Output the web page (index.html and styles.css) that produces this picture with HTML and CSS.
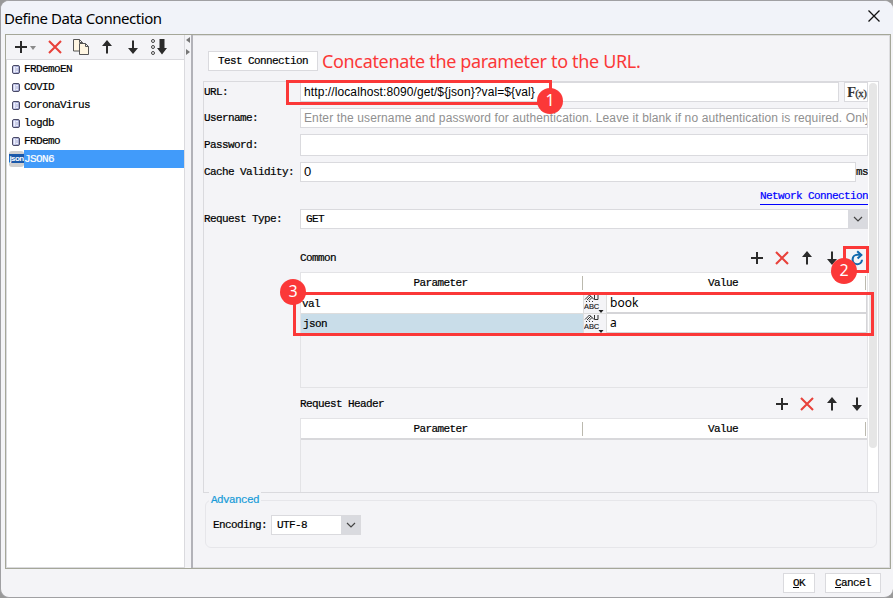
FILE: index.html
```html
<!DOCTYPE html>
<html lang="en">
<head>
<meta charset="utf-8">
<title>Define Data Connection</title>
<link rel="stylesheet" href="styles.css">
</head>
<body>
<svg class="defs" width="0" height="0" aria-hidden="true">
  <symbol id="plus" viewBox="0 0 16 16"><path d="M8 2v12M2 8h12" stroke="#2b2b2b" stroke-width="2" fill="none"/></symbol>
  <symbol id="cross" viewBox="0 0 16 16"><path d="M2 2l12 12M14 2L2 14" stroke="#e8413b" stroke-width="2.100" fill="none"/></symbol>
  <symbol id="up" viewBox="0 0 16 16"><path d="M8 1l5 6H9v7.500H7V7H3z" fill="#2b2b2b"/></symbol>
  <symbol id="down" viewBox="0 0 16 16"><path d="M8 15l5-6H9V1.500H7V9H3z" fill="#2b2b2b"/></symbol>
  <symbol id="db" viewBox="0 0 8 9"><rect x=".5" y=".5" width="7" height="8" rx="1.500" fill="#a9aed6" stroke="#4a4a66"/><path d="M1.500 1.500h2v6h-2z" fill="#eef0ff"/><path d="M4 2.500h2M4 6.500h2M5 3v3" stroke="#fff" stroke-width=".8"/></symbol>
  <symbol id="chev" viewBox="0 0 10 6"><path d="M1 1l4 4 4-4" fill="none" stroke="#444" stroke-width="1.200"/></symbol>
  <symbol id="type" viewBox="0 0 20 20"><path d="M1 5.500l4.500-4.500 4.500 4.500M3 6l4-4M5 6.500l3-3M2 7.500h1M5 7.500h1M8 7.500h1M10.500 1v4.500h3.500V1" fill="none" stroke="#333" stroke-width="1"/><text x="0" y="15" font-family="Liberation Sans" font-size="7.500" letter-spacing="-.1" fill="#222" stroke="#222" stroke-width=".15">ABC</text><path d="M14.500 16h5l-2.500 3z" fill="#222"/></symbol>
</svg>
<div class="window">
  <header class="titlebar"><span class="title">Define Data Connection</span>
    <svg class="close" viewBox="0 0 12 12"><path d="M.5.500l11 11M11.500.500l-11 11" stroke="#111" stroke-width="1.300"/></svg>
  </header>
  <main class="main">
    <aside class="side">
      <div class="toolbar">
        <svg class="ico add"><use href="#plus"/></svg><i class="caret"></i>
        <svg class="ico"><use href="#cross"/></svg>
        <svg class="ico" viewBox="0 0 16 16"><path d="M.5.500h6l3 3v8.500h-9zM6.500.500v3h3" fill="#fff6e2" stroke="#555"/><path d="M6.500 4.500h6l3 3v8h-9zM12.500 4.500v3h3" fill="#fff6e2" stroke="#555"/></svg>
        <svg class="ico"><use href="#up"/></svg>
        <svg class="ico"><use href="#down"/></svg>
        <svg class="ico" viewBox="0 0 16 16"><g fill="none" stroke="#444"><circle cx="2" cy="2" r="1.500"/><circle cx="2" cy="8" r="1.500"/><circle cx="2" cy="14" r="1.500"/></g><path d="M8.500 0h5v9h2.500l-5 6.500L6 9h2.500z" fill="#2b2b2b"/></svg>
      </div>
      <ul class="list">
        <li><svg class="db"><use href="#db"/></svg><span>FRDemoEN</span></li>
        <li><svg class="db"><use href="#db"/></svg><span>COVID</span></li>
        <li><svg class="db"><use href="#db"/></svg><span>CoronaVirus</span></li>
        <li><svg class="db"><use href="#db"/></svg><span>logdb</span></li>
        <li><svg class="db"><use href="#db"/></svg><span>FRDemo</span></li>
        <li class="sel"><b class="json">json</b><span>JSON6</span></li>
      </ul>
    </aside>
    <div class="split"><i class="tri left"></i><i class="tri right"></i></div>
    <section class="content">
      <div class="top"><button class="btn test">Test Connection</button><span class="note">Concatenate the parameter to the URL.</span></div>
      <div class="scroll">
        <div class="form">
          <div class="row url"><label>URL:</label><div class="field address">http://localhost:8090/get/${json}?val=${val}</div><div class="fx">F<small>(x)</small></div></div>
          <div class="row user"><label>Username:</label><div class="field hint">Enter the username and password for authentication. Leave it blank if no authentication is required. Only</div></div>
          <div class="row pass"><label>Password:</label><div class="field"></div></div>
          <div class="row cache"><label>Cache Validity:</label><div class="field zero">0</div><span class="ms">ms</span></div>
          <div class="linkrow"><a>Network Connection</a></div>
          <div class="row req"><label>Request Type:</label><div class="combo"><span>GET</span><i><svg><use href="#chev"/></svg></i></div></div>
          <div class="block">
            <div class="bar common"><span>Common</span>
              <div class="tools"><svg><use href="#plus"/></svg><svg><use href="#cross"/></svg><svg><use href="#up"/></svg><svg><use href="#down"/></svg><svg viewBox="0 0 16 16"><path d="M11.500 4.800H8.500A4.700 4.700 0 1 0 13 9.800" fill="none" stroke="#1169ad" stroke-width="2.100"/><path d="M8.200 1.200L12.300 5 8.600 8.500" fill="none" stroke="#1169ad" stroke-width="2.100"/></svg></div>
            </div>
            <div class="table params">
              <div class="head"><span>Parameter</span><span>Value</span></div>
              <div class="tr"><span class="key">val</span><span class="type"><svg><use href="#type"/></svg></span><span class="val">book</span></div>
              <div class="tr on"><span class="key">json</span><span class="type"><svg><use href="#type"/></svg></span><span class="val">a</span></div>
            </div>
            <div class="bar header"><span>Request Header</span>
              <div class="tools"><svg><use href="#plus"/></svg><svg><use href="#cross"/></svg><svg><use href="#up"/></svg><svg><use href="#down"/></svg></div>
            </div>
            <div class="table headers"><div class="head"><span>Parameter</span><span>Value</span></div></div>
          </div>
        </div>
        <div class="track"><div class="thumb"></div></div>
      </div>
      <div class="advanced"><span class="legend">Advanced</span><label>Encoding:</label><div class="combo enc"><span>UTF-8</span><i><svg><use href="#chev"/></svg></i></div></div>
    </section>
  </main>
  <footer class="footer"><button class="btn"><u>O</u>K</button><button class="btn cancel"><u>C</u>ancel</button></footer>
  <div class="mark m1"></div><div class="mark m2"></div><div class="mark m3"></div>
  <b class="dot d1">1</b><b class="dot d2">2</b><b class="dot d3">3</b>
</div>
</body>
</html>
```
FILE: styles.css
```css
* { box-sizing: border-box; }
body { margin: 0; background: #999; font: 11px/18px "Liberation Mono", monospace; letter-spacing: -.6px; color: #000; -webkit-text-stroke: .2px; overflow: hidden; }
.defs { position: absolute; }
svg { display: block; flex: none; }
.window { position: relative; width: 893px; height: 598px; background: #f4f4f7; border: 1px solid #a0a0a3; border-right: 0; border-radius: 9px; overflow: hidden; display: flex; flex-direction: column; }
.titlebar { height: 33px; flex: none; background: #f1f3f9; display: flex; align-items: center; justify-content: space-between; padding: 0 13px 0 3px; }
.title { font: 15px/30px "Noto Sans", sans-serif; letter-spacing: -.45px; -webkit-text-stroke: 0; }
.close { width: 12px; height: 12px; margin-top: -3px; }
.main { margin-left: 4px; width: 886px; height: 535px; flex: none; border: 1px solid #a5a799; display: flex; }
.side { width: 179px; flex: none; border: solid #dadade; border-width: 0 1px 1px 0; display: flex; flex-direction: column; }
.toolbar { height: 24px; display: flex; align-items: center; padding-left: 7px; flex: none; }
.ico { width: 16px; height: 16px; margin-right: 10px; }
.ico.add { margin-right: 1px; }
.caret { border: 3px solid transparent; border-top: 4px solid #8a8a8a; border-bottom: 0; margin: 1px 11px 0 0; }
.list { list-style: none; margin: 0; padding: 0; flex: 1; background: #fff; border-top: 1px solid #dadade; border-left: 1px solid #dadade; }
.list li { height: 18px; display: flex; align-items: center; padding-left: 5px; }
.db { width: 8px; height: 9px; margin-right: 4px; }
.list .sel { padding-left: 2px; }
.sel span { background: #419bfa; color: #fff; flex: 1; }
.json { width: 15px; height: 16px; font: bold 8px/9px "Liberation Sans", sans-serif; letter-spacing: -.6px; color: #fff; border: solid #cfcfcf; border-width: 3px 0 4px; border-radius: 3px; background: #1a59aa; text-align: center; -webkit-text-stroke: 0; }
.split { width: 8px; flex: none; border-right: 2px solid #b2b2b8; padding-top: 2px; }
.tri { display: block; width: 4px; height: 6px; margin: 0 0 6px 1px; border: solid transparent; border-width: 3px 0; }
.left { border-right: 4px solid #777; }
.right { border-left: 4px solid #777; }
.content { flex: 1; min-width: 0; padding: 15px 9px 0 10px; border: solid #dddde0; border-width: 1px 1px 1px 0; }
.top { display: flex; align-items: center; height: 20px; padding-left: 5px; margin-bottom: 10px; }
.btn { font: inherit; letter-spacing: inherit; color: inherit; height: 20px; border: 1px solid #dadade; background: #fff; padding: 0; width: 32px; }
.btn.test { width: 110px; }
.btn.cancel { width: 56px; }
.note { font: 18px/20px "Noto Sans", sans-serif; color: #fb3838; letter-spacing: -.34px; margin-left: 4px; white-space: nowrap; -webkit-text-stroke: 0; }
.scroll { width: 676px; height: 412px; border: 1px solid #dadade; display: flex; overflow: hidden; }
.form { width: 664px; flex: none; overflow: hidden; }
.row { display: flex; height: 20px; align-items: center; }
.row label { width: 96px; flex: none; }
.field { flex: 1; min-width: 0; height: 100%; border: 1px solid #dadade; background: #fff; font: 12px/18px "Liberation Sans", sans-serif; letter-spacing: 0; padding-left: 3px; white-space: nowrap; overflow: hidden; -webkit-text-stroke: 0; }
.address { letter-spacing: .1px; }
.hint { color: #909090; letter-spacing: .12px; }
.user { margin-top: 6px; }
.pass { margin-top: 6px; height: 22px; }
.cache { margin-top: 6px; }
.zero { font-size: 13px; }
.ms { width: 12px; }
.fx { width: 24px; height: 20px; margin-left: 5px; border: 1px solid #dadade; background: #fff; font: bold 15px/18px "Liberation Serif", serif; letter-spacing: -.9px; padding-left: 2px; color: #333; white-space: nowrap; -webkit-text-stroke: 0; }
.fx small { font: 11px "Liberation Serif", serif; letter-spacing: -.6px; -webkit-text-stroke: .3px; }
.linkrow { height: 27px; padding-top: 5px; text-align: right; }
.linkrow a { display: inline-block; color: #00f; line-height: 15px; border-bottom: 1px solid #00f; }
.combo { flex: 1; height: 20px; border: 1px solid #dadade; background: #fff; display: flex; justify-content: space-between; padding-left: 5px; }
.combo i { width: 19px; background: #d9dadf; display: grid; place-items: center; }
.combo svg { width: 10px; height: 6px; }
.block { margin-left: 96px; }
.bar { display: flex; align-items: center; justify-content: space-between; }
.common { height: 43px; padding-top: 15px; }
.header { height: 30px; padding-top: 2px; }
.tools { display: flex; gap: 9px; margin-right: 3px; }
.tools svg { width: 16px; height: 16px; }
.table { border: 1px solid #e3e3e6; }
.params { height: 116px; }
.headers { height: 90px; }
.head { height: 21px; background: #fff; border-bottom: 2px solid #d8d8db; display: flex; text-align: center; align-items: center; line-height: 14px; }
.head span { width: 282px; flex: none; border-right: 1px solid #bbb9ae; padding-right: 2px; }
.head span + span { width: 283px; }
.tr { height: 20px; display: flex; }
.key { width: 282px; background: #fff; border-bottom: 1px solid #ddd; padding-left: 1px; line-height: 20px; }
.on .key { background: #c9dde9; padding-left: 2px; }
.type { width: 24px; border: 1px solid #ddd; border-width: 0 1px 1px; }
.type svg { width: 20px; height: 20px; }
.val { width: 260px; border: solid #d5d5d8; border-width: 0 1px 2px 0; background: #fff; font: 12px/18px "Noto Sans", sans-serif; letter-spacing: 0; padding-left: 3px; -webkit-text-stroke: 0; }
.track { flex: 1; background: #fff; padding: 1px 1px 0; }
.thumb { width: 8px; height: 365px; border-radius: 4px; background: #e6e6e6; }
.advanced { position: relative; margin: 7px 0 0 2px; width: 672px; height: 48px; border: 1px solid #e6e6ea; border-radius: 6px; display: flex; align-items: center; padding: 2px 0 0 7px; }
.legend { position: absolute; left: 3px; top: -10px; padding: 0 2px; background: #f4f4f7; color: #179bd8; }
.enc { flex: none; width: 90px; margin-left: 4px; }
.footer { display: flex; gap: 10px; justify-content: flex-end; padding: 4px 12px 0 0; }
.mark { position: absolute; border: 3px solid #fb3838; }
.m1 { left: 285px; top: 79px; width: 266px; height: 25px; }
.m2 { left: 842px; top: 245px; width: 26px; height: 27px; }
.m3 { left: 292px; top: 291px; width: 581px; height: 44px; }
.dot { position: absolute; width: 26px; height: 26px; border-radius: 50%; background: #fb3838; color: #fff; font: 16px/24px "Noto Sans", sans-serif; text-align: center; letter-spacing: 0; -webkit-text-stroke: 0; }
.d1 { left: 536px; top: 87px; }
.d2 { left: 830px; top: 257px; }
.d3 { left: 279px; top: 278px; }
```
